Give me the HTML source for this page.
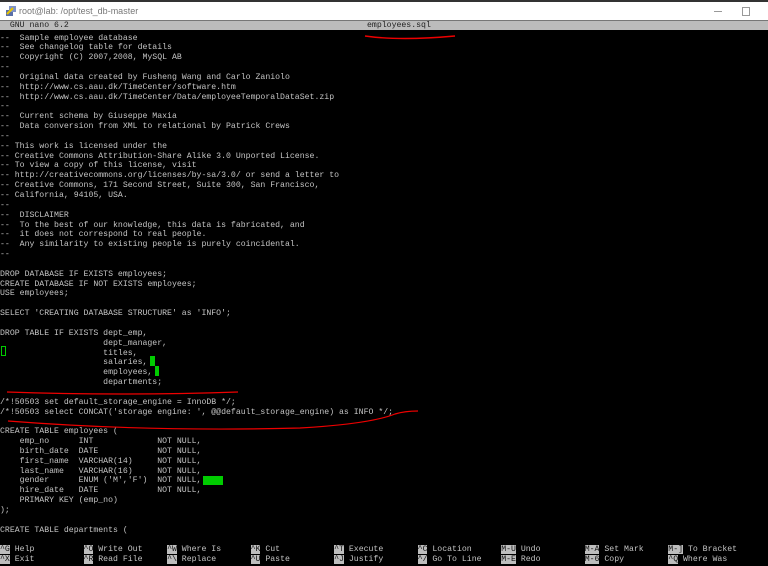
<!DOCTYPE html>
<html><head><meta charset="utf-8">
<style>
html,body{margin:0;padding:0;background:#000;width:768px;height:566px;overflow:hidden;position:relative}
.tb{position:absolute;left:0;top:0;width:768px;height:20px;background:#fff;border-top:2px solid #333;box-sizing:border-box}
.tb .t{position:absolute;left:19px;top:4px;font:9px "Liberation Sans",sans-serif;color:#777}
.hd{position:absolute;left:0;top:20px;width:768px;height:10px;background:#bcbcbc;border-top:1px solid #777;box-sizing:border-box}
pre{margin:0;font-family:"Liberation Mono",monospace;font-size:8.2px;line-height:9.85px;color:#c4c4c4;position:absolute;left:0;white-space:pre}
.k{background:#bdbdbd;color:#111}
.g{position:absolute;background:#0c0}
</style></head><body>
<div class="tb">
<svg style="position:absolute;left:5px;top:3px" width="12" height="12" viewBox="0 0 12 12"><rect x="1" y="5" width="7" height="6" fill="#5a6fa8"/><rect x="4" y="1" width="7" height="6" fill="#7f93c8"/><path d="M2 9 L8 3" stroke="#e8c400" stroke-width="2"/></svg>
<span class="t">root@lab: /opt/test_db-master</span>
<div style="position:absolute;left:714px;top:9px;width:8px;height:1px;background:#999"></div>
<div style="position:absolute;left:742px;top:5px;width:6px;height:7px;border:1px solid #999"></div>
</div>
<div class="hd"></div>
<pre style="top:20.5px;left:0;color:#222">  GNU nano 6.2</pre>
<pre style="top:20.5px;left:367px;color:#222">employees.sql</pre>
<pre style="top:33.5px">--  Sample employee database
--  See changelog table for details
--  Copyright (C) 2007,2008, MySQL AB
--
--  Original data created by Fusheng Wang and Carlo Zaniolo
--  http://www.cs.aau.dk/TimeCenter/software.htm
--  http://www.cs.aau.dk/TimeCenter/Data/employeeTemporalDataSet.zip
--
--  Current schema by Giuseppe Maxia
--  Data conversion from XML to relational by Patrick Crews
--
-- This work is licensed under the
-- Creative Commons Attribution-Share Alike 3.0 Unported License.
-- To view a copy of this license, visit
-- http://creativecommons.org/licenses/by-sa/3.0/ or send a letter to
-- Creative Commons, 171 Second Street, Suite 300, San Francisco,
-- California, 94105, USA.
--
--  DISCLAIMER
--  To the best of our knowledge, this data is fabricated, and
--  it does not correspond to real people.
--  Any similarity to existing people is purely coincidental.
--

DROP DATABASE IF EXISTS employees;
CREATE DATABASE IF NOT EXISTS employees;
USE employees;

SELECT 'CREATING DATABASE STRUCTURE' as 'INFO';

DROP TABLE IF EXISTS dept_emp,
                     dept_manager,
                     titles,
                     salaries,
                     employees,
                     departments;

/*!50503 set default_storage_engine = InnoDB */;
/*!50503 select CONCAT('storage engine: ', @@default_storage_engine) as INFO */;

CREATE TABLE employees (
    emp_no      INT             NOT NULL,
    birth_date  DATE            NOT NULL,
    first_name  VARCHAR(14)     NOT NULL,
    last_name   VARCHAR(16)     NOT NULL,
    gender      ENUM ('M','F')  NOT NULL,
    hire_date   DATE            NOT NULL,
    PRIMARY KEY (emp_no)
);

CREATE TABLE departments (

<span class="k">^G</span> Help          <span class="k">^O</span> Write Out     <span class="k">^W</span> Where Is      <span class="k">^K</span> Cut           <span class="k">^T</span> Execute       <span class="k">^C</span> Location      <span class="k">M-U</span> Undo         <span class="k">M-A</span> Set Mark     <span class="k">M-]</span> To Bracket
<span class="k">^X</span> Exit          <span class="k">^R</span> Read File     <span class="k">^\</span> Replace       <span class="k">^U</span> Paste         <span class="k">^J</span> Justify       <span class="k">^/</span> Go To Line    <span class="k">M-E</span> Redo         <span class="k">M-6</span> Copy         <span class="k">^Q</span> Where Was</pre>
<div style="position:absolute;left:1px;top:346px;width:3px;height:8px;border:1px solid #0c0"></div>
<div class="g" style="left:150px;top:356px;width:5px;height:10px"></div>
<div class="g" style="left:155px;top:366px;width:4px;height:10px"></div>
<div class="g" style="left:203px;top:476px;width:20px;height:9px"></div>
<svg style="position:absolute;left:0;top:0" width="768" height="566">
<path d="M365 36 Q400 41 455 36" stroke="#e00" stroke-width="1.4" fill="none"/>
<path d="M7 392 Q120 396 238 392" stroke="#e00" stroke-width="1.2" fill="none"/>
<path d="M8 421 Q150 432 300 428 Q370 424 395 414 Q405 411 418 411" stroke="#e00" stroke-width="1.2" fill="none"/>
</svg>
</body></html>
